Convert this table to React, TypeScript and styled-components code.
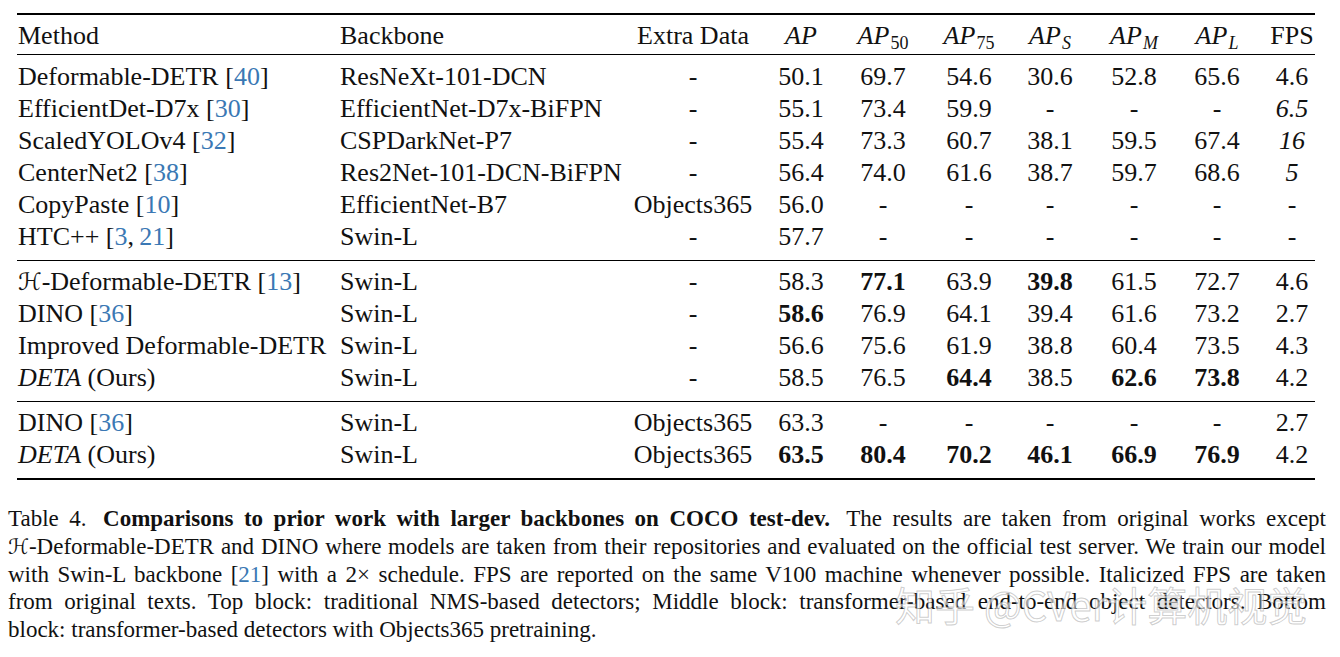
import React from "react"
import styled, { createGlobalStyle } from "styled-components"

const GlobalStyle = createGlobalStyle`
  html, body {
    margin: 0;
    padding: 0;
    background: #fff;
    overflow: hidden;
  }
  body {
    font-family: "Liberation Serif", "Times New Roman", serif;
    color: #111;
  }
`

type Value = string

type Entry = {
  method: React.ReactNode
  backbone: string
  extra: string
  values: Value[]
}

const Cite = styled.span`
  color: #3a78b4;
`

const Ref = ({ nums }: { nums: string[] }) => (
  <>
    [
    {nums.map((n, i) => (
      <React.Fragment key={n}>
        {i > 0 && ",\u2009"}
        <Cite>{n}</Cite>
      </React.Fragment>
    ))}
    ]
  </>
)

const Cal = styled.span`
  font-family: "DejaVu Serif", "DejaVu Sans", serif;
  font-style: italic;
  font-size: 0.92em;
`

const Em = styled.i`
  font-style: italic;
`

const blocks: Entry[][] = [
  [
    {
      method: <>Deformable-DETR <Ref nums={["40"]} /></>,
      backbone: "ResNeXt-101-DCN",
      extra: "-",
      values: ["50.1", "69.7", "54.6", "30.6", "52.8", "65.6", "4.6"],
    },
    {
      method: <>EfficientDet-D7x <Ref nums={["30"]} /></>,
      backbone: "EfficientNet-D7x-BiFPN",
      extra: "-",
      values: ["55.1", "73.4", "59.9", "-", "-", "-", "i:6.5"],
    },
    {
      method: <>ScaledYOLOv4 <Ref nums={["32"]} /></>,
      backbone: "CSPDarkNet-P7",
      extra: "-",
      values: ["55.4", "73.3", "60.7", "38.1", "59.5", "67.4", "i:16"],
    },
    {
      method: <>CenterNet2 <Ref nums={["38"]} /></>,
      backbone: "Res2Net-101-DCN-BiFPN",
      extra: "-",
      values: ["56.4", "74.0", "61.6", "38.7", "59.7", "68.6", "i:5"],
    },
    {
      method: <>CopyPaste <Ref nums={["10"]} /></>,
      backbone: "EfficientNet-B7",
      extra: "Objects365",
      values: ["56.0", "-", "-", "-", "-", "-", "-"],
    },
    {
      method: <>HTC++ <Ref nums={["3", "21"]} /></>,
      backbone: "Swin-L",
      extra: "-",
      values: ["57.7", "-", "-", "-", "-", "-", "-"],
    },
  ],
  [
    {
      method: <><Cal>ℋ</Cal>-Deformable-DETR <Ref nums={["13"]} /></>,
      backbone: "Swin-L",
      extra: "-",
      values: ["58.3", "b:77.1", "63.9", "b:39.8", "61.5", "72.7", "4.6"],
    },
    {
      method: <>DINO <Ref nums={["36"]} /></>,
      backbone: "Swin-L",
      extra: "-",
      values: ["b:58.6", "76.9", "64.1", "39.4", "61.6", "73.2", "2.7"],
    },
    {
      method: "Improved Deformable-DETR",
      backbone: "Swin-L",
      extra: "-",
      values: ["56.6", "75.6", "61.9", "38.8", "60.4", "73.5", "4.3"],
    },
    {
      method: <><Em>DETA</Em> (Ours)</>,
      backbone: "Swin-L",
      extra: "-",
      values: ["58.5", "76.5", "b:64.4", "38.5", "b:62.6", "b:73.8", "4.2"],
    },
  ],
  [
    {
      method: <>DINO <Ref nums={["36"]} /></>,
      backbone: "Swin-L",
      extra: "Objects365",
      values: ["63.3", "-", "-", "-", "-", "-", "2.7"],
    },
    {
      method: <><Em>DETA</Em> (Ours)</>,
      backbone: "Swin-L",
      extra: "Objects365",
      values: ["b:63.5", "b:80.4", "b:70.2", "b:46.1", "b:66.9", "b:76.9", "4.2"],
    },
  ],
]

const Page = styled.main`
  position: relative;
  width: 1340px;
  height: 657px;
  padding-top: 13px;
  box-sizing: border-box;
`

const Table = styled.div`
  margin-left: 17px;
  width: 1298px;
  display: flex;
  flex-direction: column;
`

const Rule = styled.div<{ $weight?: number }>`
  height: ${(p) => p.$weight ?? 1}px;
  background: #000;
`

const Block = styled.div<{ $top?: number }>`
  padding: ${(p) => p.$top ?? 5}px 0 7px;
`

const Row = styled.div`
  display: grid;
  grid-template-columns: 322px 285px 138px 78px 86px 86px 76px 92px 74px 76px;
  height: 32px;
  font-size: 26px;
  line-height: 32px;
  white-space: nowrap;
`

const HeadRow = styled(Row)`
  margin: 5px 0 2px;
`

const Cell = styled.div<{ $left?: boolean; $bold?: boolean; $italic?: boolean }>`
  text-align: ${(p) => (p.$left ? "left" : "center")};
  padding-left: ${(p) => (p.$left ? "1px" : "0")};
  font-weight: ${(p) => (p.$bold ? 700 : 400)};
  font-style: ${(p) => (p.$italic ? "italic" : "normal")};
`

const Sym = styled.span`
  font-style: italic;
`

const Sub = styled.span<{ $italic?: boolean }>`
  font-size: 18px;
  line-height: 0;
  vertical-align: -5px;
  font-style: ${(p) => (p.$italic ? "italic" : "normal")};
  margin-left: 1px;
`

const AP = ({ sub, italic }: { sub?: string; italic?: boolean }) => (
  <>
    <Sym>AP</Sym>
    {sub && <Sub $italic={italic}>{sub}</Sub>}
  </>
)

const Caption = styled.div`
  margin: 25px 0 0 8px;
  width: 1318px;
  font-size: 23px;
  line-height: 27.8px;
  color: #111;
`

const Line = styled.div<{ $last?: boolean }>`
  white-space: ${(p) => (p.$last ? "normal" : "nowrap")};
  word-spacing: ${(p) => (p.$last ? "0" : "-2.5px")};
  text-align: ${(p) => (p.$last ? "left" : "justify")};
  text-align-last: ${(p) => (p.$last ? "left" : "justify")};
`

const Strong = styled.b`
  font-weight: 700;
`

const Gap = styled.span<{ $w: number }>`
  display: inline-block;
  width: ${(p) => p.$w}px;
`

const Watermark = styled.div`
  position: absolute;
  left: 895px;
  top: 584px;
  font-family: "Noto Sans CJK SC", "Noto Sans", sans-serif;
  font-size: 40px;
  line-height: 40px;
  white-space: nowrap;
  color: rgba(255, 255, 255, 0.6);
  -webkit-text-stroke: 1px rgba(130, 130, 130, 0.4);
  pointer-events: none;
`

const ValueCell = ({ v }: { v: Value }) => {
  if (v.startsWith("b:")) return <Cell $bold>{v.slice(2)}</Cell>
  if (v.startsWith("i:")) return <Cell $italic>{v.slice(2)}</Cell>
  return <Cell>{v}</Cell>
}

const App = () => {
  return (
    <Page>
      <GlobalStyle />
      <Table>
        <Rule $weight={2} />
        <HeadRow>
          <Cell $left>Method</Cell>
          <Cell $left>Backbone</Cell>
          <Cell>Extra Data</Cell>
          <Cell><AP /></Cell>
          <Cell><AP sub="50" /></Cell>
          <Cell><AP sub="75" /></Cell>
          <Cell><AP sub="S" italic /></Cell>
          <Cell><AP sub="M" italic /></Cell>
          <Cell><AP sub="L" italic /></Cell>
          <Cell>FPS</Cell>
        </HeadRow>
        {blocks.map((rows, bi) => (
          <React.Fragment key={bi}>
            <Rule />
            <Block $top={bi === 0 ? 6 : 5}>
              {rows.map((r, ri) => (
                <Row key={ri}>
                  <Cell $left>{r.method}</Cell>
                  <Cell $left>{r.backbone}</Cell>
                  <Cell>{r.extra}</Cell>
                  {r.values.map((v, vi) => (
                    <ValueCell key={vi} v={v} />
                  ))}
                </Row>
              ))}
            </Block>
          </React.Fragment>
        ))}
        <Rule $weight={2} />
      </Table>
      <Caption>
        <Line>
          Table 4.<Gap $w={6} /> <Strong>Comparisons to prior work with larger backbones on COCO test-dev.</Strong>
          <Gap $w={6} /> The results are taken from original works except
        </Line>
        <Line>
          <Cal>ℋ</Cal>-Deformable-DETR and DINO where models are taken from their repositories and evaluated on the
          official test server. We train our model
        </Line>
        <Line>
          with Swin-L backbone [<Cite>21</Cite>] with a 2× schedule. FPS are reported on the same V100 machine
          whenever possible. Italicized FPS are taken
        </Line>
        <Line>
          from original texts. Top block: traditional NMS-based detectors; Middle block: transformer-based
          end-to-end object detectors. Bottom
        </Line>
        <Line $last>block: transformer-based detectors with Objects365 pretraining.</Line>
      </Caption>
      <Watermark>知乎 @CVer计算机视觉</Watermark>
    </Page>
  )
}

export default App
